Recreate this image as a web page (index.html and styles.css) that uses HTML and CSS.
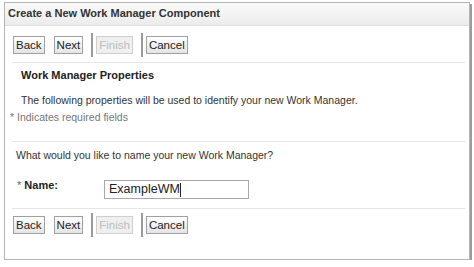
FILE: index.html
```html
<!DOCTYPE html>
<html>
<head>
<meta charset="utf-8">
<link rel="stylesheet" href="styles.css">
</head>
<body>
<div class="panel">
  <div class="header">Create a New Work Manager Component</div>
  <div class="toolbar">
    <button class="btn">Back</button>
    <button class="btn">Next</button>
    <span class="sep"></span>
    <button class="btn disabled">Finish</button>
    <span class="sep"></span>
    <button class="btn">Cancel</button>
  </div>
  <div class="rule"></div>
  <div class="section">
    <div class="sec-title">Work Manager Properties</div>
    <div class="sec-text">The following properties will be used to identify your new Work Manager.</div>
  </div>
  <div class="required">* Indicates required fields</div>
  <div class="rule rule2"></div>
  <div class="question">What would you like to name your new Work Manager?</div>
  <div class="field">
    <label class="label"><span class="star">*</span>&nbsp;Name:</label>
    <div class="input">ExampleWM<span class="caret"></span></div>
  </div>
  <div class="rule rule3"></div>
  <div class="toolbar toolbar2">
    <button class="btn">Back</button>
    <button class="btn">Next</button>
    <span class="sep"></span>
    <button class="btn disabled">Finish</button>
    <span class="sep"></span>
    <button class="btn">Cancel</button>
  </div>
</div>
</body>
</html>
```
FILE: styles.css
```css
html, body {
  margin: 0;
  padding: 0;
  background: #ffffff;
}
body {
  font-family: "Liberation Sans", Tahoma, sans-serif;
  color: #333;
}
.panel {
  box-sizing: border-box;
  margin: 2px 0 0 4px;
  width: 466px;
  height: 258px;
  border: 1px solid #b4b4b4;
  box-shadow: 2px 2px 0 #9c9c9c;
  background: #fff;
}
.header {
  box-sizing: border-box;
  height: 23px;
  padding: 4px 0 0 3px;
  font-size: 11px;
  font-weight: bold;
  color: #333;
  background: linear-gradient(#fafafa, #ececec);
  border-bottom: 1px solid #dedede;
}
.toolbar {
  display: flex;
  align-items: center;
  padding: 3px 0 0 8px;
  height: 32px;
  box-sizing: content-box;
}
.btn {
  font-family: "Liberation Sans", Arial, sans-serif;
  font-size: 11.5px;
  color: #222;
  height: 18px;
  padding: 0 2px;
  margin: 0 9px 0 0;
  border: 1px solid #a0a0a0;
  border-radius: 0;
  background: linear-gradient(#ffffff, #e4e4e4);
  line-height: 16px;
}
.btn.disabled {
  color: #bdbdbd;
  border-color: #cfcfcf;
  background: #efefef;
}
.sep {
  width: 2px;
  height: 24px;
  background: #9a9a9a;
  margin: 0 3px 0 -1px;
}
.rule {
  height: 1px;
  background: #e6e6e6;
  margin: 1px 4px 0 7px;
}
.section {
  padding: 6px 0 0 16px;
}
.sec-title {
  font-size: 11px;
  font-weight: bold;
  color: #222;
  height: 16px;
  line-height: 13px;
}
.sec-text {
  font-size: 10.5px;
  color: #333;
  margin-top: 9px;
  height: 14px;
  line-height: 13px;
}
.required {
  font-size: 10.5px;
  color: #777;
  padding: 3px 0 0 5px;
  height: 14px;
  line-height: 13px;
}
.rule2 {
  margin-top: 16px;
}
.question {
  font-size: 10.5px;
  color: #333;
  padding: 7px 0 0 11px;
  height: 14px;
  line-height: 13px;
}
.field {
  display: flex;
  align-items: flex-start;
  margin-top: 17px;
  padding-left: 12px;
  height: 19px;
}
.label {
  width: 87px;
  margin-top: -1px;
  font-size: 11px;
  line-height: 13px;
  font-weight: bold;
  color: #222;
}
.star {
  font-weight: normal;
  color: #666;
}
.input {
  box-sizing: border-box;
  width: 145px;
  height: 19px;
  border: 1px solid #a8a8a8;
  font-family: "Liberation Sans", Arial, sans-serif;
  font-size: 12.5px;
  color: #222;
  padding: 0 0 0 4px;
  line-height: 17px;
  display: flex;
  align-items: center;
}
.caret {
  width: 1px;
  height: 14px;
  background: #222;
}
.rule3 {
  margin-top: 9px;
}
.toolbar2 {
  padding-top: 3px;
  height: 26px;
}
```
